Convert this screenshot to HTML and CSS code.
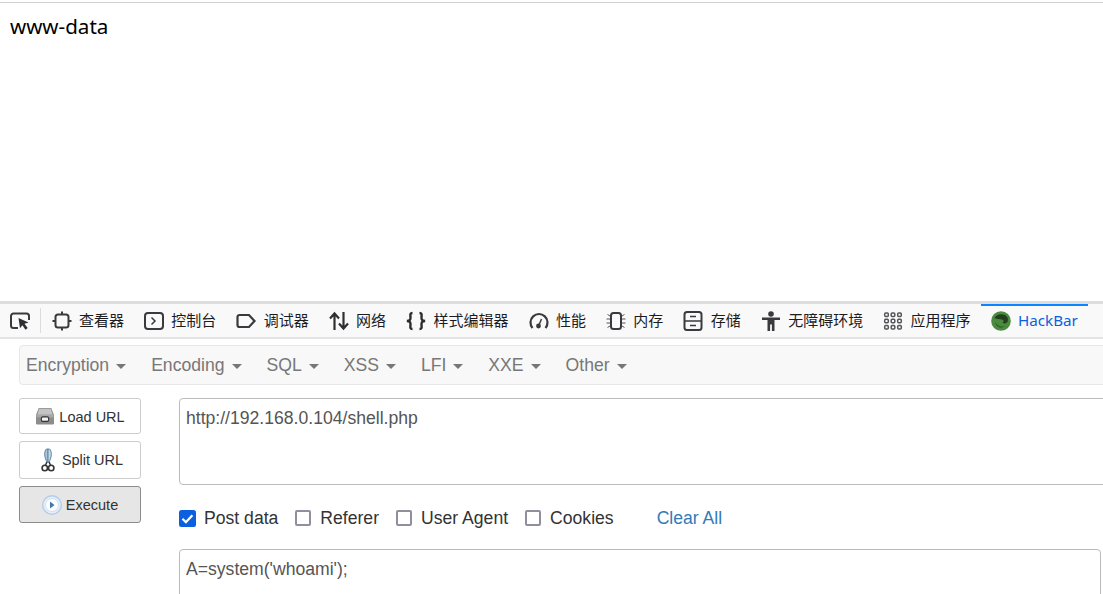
FILE: index.html
```html
<!DOCTYPE html>
<html lang="zh">
<head>
<meta charset="utf-8">
<title>HackBar</title>
<link rel="stylesheet" href="styles.css">
</head>
<body>
<main class="page"><p class="output">www-data</p></main>
<section class="devtools">
  <nav class="toolbar">
    <span class="picker">
      <svg width="20" height="20" viewBox="0 0 20 20"><path d="M8 17H3.500a2.500 2.500 0 0 1-2.500-2.500V5a2.500 2.500 0 0 1 2.500-2.500h13A2.500 2.500 0 0 1 19 5v4" fill="none" stroke="#3a3a3e" stroke-width="2"/><path d="M8.500 7l10 4.500-4 1.300 3.200 4.200-2.200 1.700-3.100-4.400-2.400 3z" fill="#2f2f33"/></svg>
    </span>
    <span class="sep"></span>
    <a class="tab tab-first">
      <svg width="20" height="20" viewBox="0 0 20 20"><rect x="3.500" y="3.500" width="13" height="13" rx="2.500" fill="none" stroke="#3a3a3e" stroke-width="2"/><path d="M10 0.500v3M10 16.500v3M0.500 10h3M16.500 10h3" stroke="#3a3a3e" stroke-width="2"/></svg>
      <span>查看器</span></a>
    <a class="tab">
      <svg width="20" height="20" viewBox="0 0 20 20"><rect x="1" y="2" width="18" height="16" rx="3" fill="none" stroke="#3a3a3e" stroke-width="2"/><path d="M7.500 6.500l3.500 3.500-3.500 3.500" fill="none" stroke="#3a3a3e" stroke-width="1.500"/></svg>
      <span>控制台</span></a>
    <a class="tab">
      <svg width="20" height="20" viewBox="0 0 20 20"><path d="M3.500 4h9.500l5.500 6-5.500 6H3.500a2 2 0 0 1-2-2V6a2 2 0 0 1 2-2z" fill="none" stroke="#3a3a3e" stroke-width="2.200"/></svg>
      <span>调试器</span></a>
    <a class="tab">
      <svg width="20" height="20" viewBox="0 0 20 20"><path d="M5.500 19V3M1 7.500l4.500-5 4.500 5M14.500 1v16M10 12.500l4.500 5 4.500-5" fill="none" stroke="#2f2f33" stroke-width="2.200"/></svg>
      <span>网络</span></a>
    <a class="tab">
      <svg width="20" height="20" viewBox="0 0 20 20"><path d="M6.500 2C3.500 2 4.500 4.500 4.500 6.500S4.500 9.500 1 10c3.500.5 3.500 1.500 3.500 3.500s-1 4.500 2 4.500M13.500 2c3 0 2 2.500 2 4.500s0 3 3.500 3.500c-3.500.5-3.500 1.500-3.500 3.500s1 4.500-2 4.500" fill="none" stroke="#2c2c30" stroke-width="2.400"/></svg>
      <span>样式编辑器</span></a>
    <a class="tab">
      <svg width="20" height="20" viewBox="0 0 20 20"><path d="M3.500 17A8.500 8.500 0 1 1 16.500 17" fill="none" stroke="#3a3a3e" stroke-width="2.200"/><circle cx="9.500" cy="15" r="2.400" fill="#3a3a3e"/><path d="M10 14l2.500-6" stroke="#3a3a3e" stroke-width="1.500"/></svg>
      <span>性能</span></a>
    <a class="tab">
      <svg width="20" height="20" viewBox="0 0 20 20"><rect x="5" y="2" width="10" height="16" rx="2.500" fill="none" stroke="#3a3a3e" stroke-width="2"/><path d="M4 5L1.500 3.500M4 8H.5M4 12H.5M4 15l-2.500 1.500M16 5l2.500-1.500M16 8h3.500M16 12h3.500M16 15l2.500 1.500" stroke="#55555a" stroke-width="1"/></svg>
      <span>内存</span></a>
    <a class="tab">
      <svg width="20" height="20" viewBox="0 0 20 20"><rect x="1.500" y="1" width="17" height="18" rx="2.500" fill="none" stroke="#3a3a3e" stroke-width="2"/><path d="M2 10h16M7 5.500h6M7 14.500h6" stroke="#3a3a3e" stroke-width="1.500"/></svg>
      <span>存储</span></a>
    <a class="tab">
      <svg width="20" height="20" viewBox="0 0 20 20"><circle cx="10" cy="3" r="2.800" fill="#3a3a3e"/><path d="M1 6.500h18v2.400h-5.500V20h-2.600v-6.500H9.100V20H6.500V8.900H1z" fill="#3a3a3e"/></svg>
      <span>无障碍环境</span></a>
    <a class="tab">
      <svg width="20" height="20" viewBox="0 0 20 20"><g fill="none" stroke="#55555a" stroke-width="1.500"><rect x="1.700" y="2" width="3.600" height="3.600" rx="1"/><rect x="8.200" y="2" width="3.600" height="3.600" rx="1"/><rect x="14.700" y="2" width="3.600" height="3.600" rx="1"/><rect x="1.700" y="8.200" width="3.600" height="3.600" rx="1"/><rect x="8.200" y="8.200" width="3.600" height="3.600" rx="1"/><rect x="14.700" y="8.200" width="3.600" height="3.600" rx="1"/><rect x="1.700" y="14.400" width="3.600" height="3.600" rx="1"/><rect x="8.200" y="14.400" width="3.600" height="3.600" rx="1"/><rect x="14.700" y="14.400" width="3.600" height="3.600" rx="1"/></g></svg>
      <span>应用程序</span></a>
    <a class="tab tab-active">
      <svg width="20" height="20" viewBox="0 0 20 20"><circle cx="10" cy="10" r="9.800" fill="#4c8a40"/><path d="M3.500 7C5.500 3 10 2.500 14 4c3 1.600 3.800 5.500 2 7.500-1.500 1.500-3.500 1.200-4.500 0 1.500-.5 1.300-2.300 0-2.800C9 7.800 6.500 8.500 3.500 7z" fill="#223f1e"/><path d="M4 11c2 3.500 6 5.500 10 4-3 3-9 2-10-4z" fill="#2f6128"/></svg>
      <span class="tab-latin">HackBar</span></a>
  </nav>
  <div class="panel">
    <div class="menu">
      <span class="menu-item">Encryption<i class="caret"></i></span>
      <span class="menu-item">Encoding<i class="caret"></i></span>
      <span class="menu-item">SQL<i class="caret"></i></span>
      <span class="menu-item">XSS<i class="caret"></i></span>
      <span class="menu-item">LFI<i class="caret"></i></span>
      <span class="menu-item">XXE<i class="caret"></i></span>
      <span class="menu-item">Other<i class="caret"></i></span>
    </div>
    <div class="work">
      <div class="actions">
        <button class="btn btn-load">
          <svg width="20" height="18" viewBox="0 0 22 20"><path d="M4 1h14l3 8v9a1.500 1.500 0 0 1-1.500 1.500h-17A1.500 1.500 0 0 1 1 18V9z" fill="#8d8d8d"/><path d="M4.500 2h13l2 6.500h-17z" fill="#c4c4c4"/><rect x="1.500" y="8.500" width="19" height="3" fill="#a8a8a8"/><rect x="7" y="11" width="8" height="5" rx="1.500" fill="#f2f2f2" stroke="#333" stroke-width="1.200"/></svg>
          <span class="btn-label-low">Load URL</span>
        </button>
        <button class="btn btn-split">
          <svg width="14" height="24" viewBox="0 0 14 24"><path d="M5.500 1C3 3 3 9 6 14h1V1z" fill="#a9c6dc" stroke="#5f84a0"/><path d="M8.500 1C11 3 11 9 8 14H7V1z" fill="#c3d8e8" stroke="#5f84a0"/><path d="M6 14l-1.500 3M8 14l1.500 3" stroke="#333" stroke-width="1.500"/><circle cx="3.800" cy="20" r="2.700" fill="none" stroke="#333" stroke-width="1.600"/><circle cx="10.200" cy="20" r="2.700" fill="none" stroke="#333" stroke-width="1.600"/></svg>
          <span>Split URL</span>
        </button>
        <button class="btn btn-run">
          <svg width="20" height="20" viewBox="0 0 20 20"><circle cx="10" cy="10" r="9.300" fill="#e6effa" stroke="#b4cde8" stroke-width="1.400"/><circle cx="10" cy="10" r="6.500" fill="#fff" stroke="#cfdff0"/><path d="M8 6.500l4.500 3.500L8 13.500z" fill="#3f79b5"/></svg>
          <span>Execute</span>
        </button>
      </div>
      <div class="fields">
        <div class="field field-url">http://192.168.0.104/shell.php</div>
        <div class="options">
          <label class="opt opt-checked"><svg class="check" width="17" height="17" viewBox="0 0 17 17"><rect width="17" height="17" rx="2.500" fill="#0a60df"/><path d="M3.500 8.800l3.400 3.400 6.500-7" fill="none" stroke="#fff" stroke-width="2.300"/></svg>Post data</label>
          <label class="opt"><span class="box"></span>Referer</label>
          <label class="opt"><span class="box"></span>User Agent</label>
          <label class="opt"><span class="box"></span>Cookies</label>
          <a class="clear">Clear All</a>
        </div>
        <div class="field field-post">A=system('whoami');</div>
      </div>
    </div>
  </div>
</section>
</body>
</html>
```
FILE: styles.css
```css
* { box-sizing: border-box; }
html, body { margin: 0; height: 594px; overflow: hidden; background: #fff; }
body { display: flex; flex-direction: column; font-family: "Liberation Sans", Arial, sans-serif; }

.page { height: 301px; flex: none; margin-top: 2px; border-top: 1px solid #d0d0d0; padding: 12px 10px 0; }
.output { margin: 0; font: 20.600px/22px "Noto Sans", "Open Sans", sans-serif; color: #000; }

.devtools { flex: 1; min-width: 0; display: flex; flex-direction: column; margin-top: -2px; }

.toolbar { flex: none; height: 38px; display: flex; align-items: stretch; background: #f9f9f9; border-top: 3px solid #dedede; border-bottom: 2px solid #e4e4e4; font: 15px "Noto Sans CJK SC", "Noto Sans", sans-serif; color: #1c1c1f; }
.picker { display: flex; align-items: center; padding-left: 10px; width: 40px; }
.sep { width: 1px; height: 25px; margin-top: 4px; background: #dcdcdc; }
.tab { display: flex; align-items: center; gap: 7.400px; padding: 0 10px; white-space: nowrap; position: relative; }
.tab span { margin-bottom: 2px; }
.tab-first { padding-left: 10.500px; }
.tab svg { flex: none; }
.tab-active { color: #0a60df; }
.tab-active::before { content: ""; position: absolute; left: 0; right: 0; top: 0; height: 2px; background: #0a84ff; }
.tab-latin { font-family: "Noto Sans", sans-serif; font-size: 15.200px; }

.panel { flex: 1; min-height: 0; display: flex; flex-direction: column; padding: 6px 0 0 19px; }
.menu { flex: none; width: 1110px; height: 40px; display: flex; align-items: center; gap: 25px; padding-left: 6px; background: #f8f8f8; border: 1px solid #e7e7e7; border-radius: 4px; font-size: 17.600px; color: #777; white-space: nowrap; }
.menu-item { display: flex; align-items: center; }
.caret { width: 0; height: 0; margin-left: 7px; margin-top: 2px; border-top: 5px solid #777; border-left: 5px solid transparent; border-right: 5px solid transparent; }

.work { flex: 1; min-height: 0; display: flex; gap: 38px; margin-top: 13px; }
.actions { flex: none; width: 122px; display: flex; flex-direction: column; gap: 7px; }
.btn { display: flex; align-items: center; justify-content: center; padding: 0; width: 122px; background: #fff; border: 1px solid #ccc; border-radius: 3px; font: 14.500px "Liberation Sans", Arial, sans-serif; color: #333; }
.btn-load { height: 36px; gap: 4px; }
.btn-label-low { margin-top: 2px; }
.btn-split { height: 38px; gap: 7px; padding-left: 4px; }
.btn-run { height: 37px; gap: 4px; background: #e6e6e6; border-color: #8c8c8c; }

.fields { flex: none; width: 922px; display: flex; flex-direction: column; }
.field { padding: 7px 6px; background: #fff; border: 1px solid #bbb; border-radius: 4px; font-size: 17.600px; line-height: 24px; color: #555; }
.field-url { flex: none; width: 940px; height: 87px; }
.field-post { flex: none; height: 60px; }

.options { flex: none; height: 64px; padding-top: 2px; display: flex; align-items: center; font-size: 17.600px; color: #333; }
.opt { display: flex; align-items: center; gap: 9px; margin-right: 17px; }
.opt-checked { gap: 8px; }
.check { flex: none; }
.box { flex: none; width: 16px; height: 16px; background: #fff; border: 2px solid #8f8f9d; border-radius: 2px; }
.clear { margin-left: 26px; color: #337ab7; }
```
